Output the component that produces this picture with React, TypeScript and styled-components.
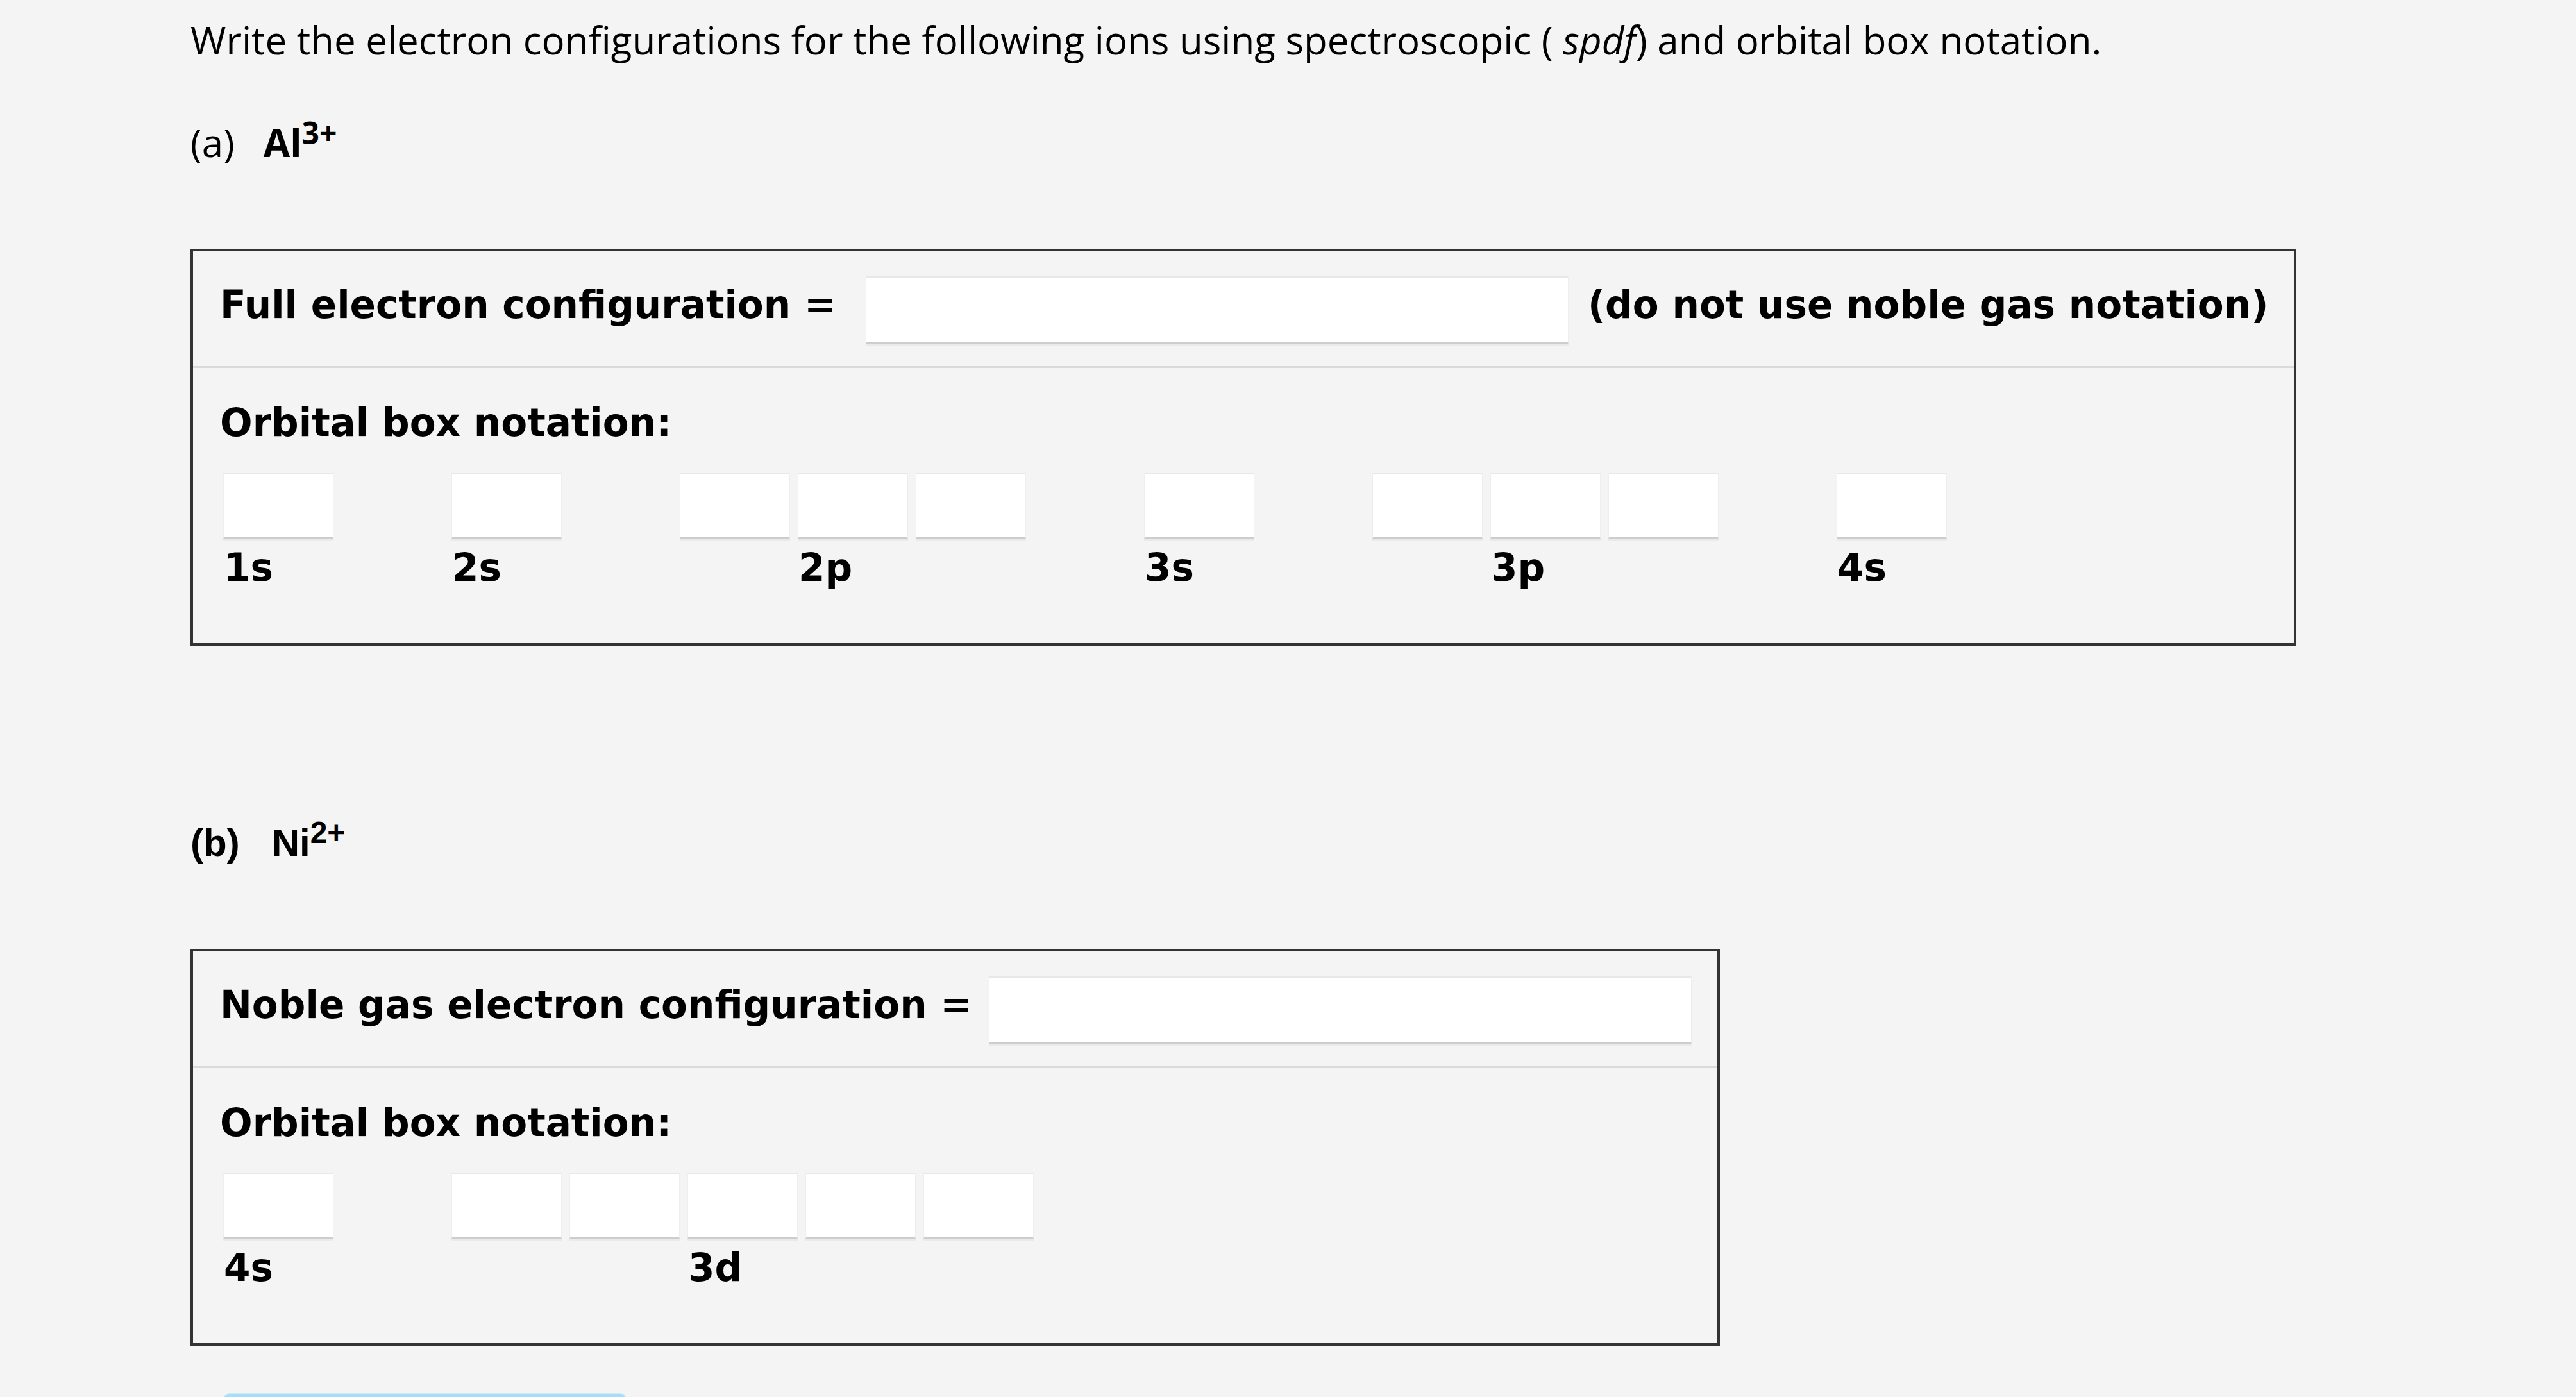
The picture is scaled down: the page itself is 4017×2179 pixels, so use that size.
import React from "react";
import styled, { createGlobalStyle } from "styled-components";

const GlobalStyle = createGlobalStyle`
  html, body {
    margin: 0;
    padding: 0;
    background: #f4f4f4;
  }
`;

const Page = styled.div`
  display: flex;
  flex-direction: column;
  align-items: flex-start;
  padding: 22px 0 0 297px;
  color: #000;
`;

const Intro = styled.div`
  font-family: "Open Sans", "Noto Sans", sans-serif;
  font-size: 60px;
  line-height: 80px;
  white-space: nowrap;
`;

const Part = styled.div<{ $top: number }>`
  margin-top: ${(p) => p.$top}px;
  font-family: "Open Sans", "Noto Sans", sans-serif;
  font-size: 60px;
  line-height: 80px;
  display: flex;
  align-items: baseline;
  gap: 45px;
`;

const PartB = styled.div<{ $top: number }>`
  margin-top: ${(p) => p.$top}px;
  font-family: "Liberation Sans", Arial, sans-serif;
  font-weight: 700;
  font-size: 60px;
  line-height: 72px;
  display: flex;
  align-items: baseline;
  gap: 50px;
`;

const Ion = styled.span`
  font-weight: 700;
`;

const Sup = styled.sup`
  font-size: 0.8em;
  line-height: 0;
  vertical-align: 0.42em;
`;

const Card = styled.div<{ $top: number }>`
  margin-top: ${(p) => p.$top}px;
  border: 4px solid #333;
  display: flex;
  flex-direction: column;
  font-family: Verdana, "DejaVu Sans", sans-serif;
  font-weight: 700;
  font-size: 59.6px;
  line-height: 72px;
`;

const ConfigRow = styled.div`
  display: flex;
  align-items: flex-start;
  padding: 39px 40px 34px 42px;
  border-bottom: 3px solid #dadada;
  white-space: nowrap;
`;

const RowText = styled.span<{ $before?: number; $after?: number }>`
  margin: 9px ${(p) => p.$after ?? 0}px 0 ${(p) => p.$before ?? 0}px;
`;

const Field = styled.div`
  box-sizing: border-box;
  width: 1096px;
  height: 106px;
  background: #fff;
  border-top: 2px solid #e8e8e8;
  border-left: 1px solid #eeeeee;
  border-right: 1px solid #eeeeee;
  border-bottom: 3px solid #cdcdcd;
  box-shadow: 0 3px 0 #eaeaea;
`;

const OrbitalSection = styled.div`
  padding: 50px 42px 81px 42px;
`;

const OrbitalTitle = styled.div`
  margin-bottom: 41px;
`;

const Groups = styled.div`
  display: flex;
  gap: 184px;
  padding-left: 5px;
`;

const Group = styled.div<{ $count: number }>`
  display: grid;
  grid-template-columns: repeat(${(p) => p.$count}, 172px);
  column-gap: 12px;
  row-gap: 9px;
`;

const Slot = styled.div`
  box-sizing: border-box;
  height: 104px;
  background: #fff;
  border-top: 2px solid #e8e8e8;
  border-left: 1px solid #eeeeee;
  border-right: 1px solid #eeeeee;
  border-bottom: 3px solid #cdcdcd;
  box-shadow: 0 3px 0 #eaeaea;
`;

const SubLabel = styled.div<{ $col: number }>`
  grid-row: 2;
  grid-column: ${(p) => p.$col};
  padding-left: 1px;
`;

const Button = styled.div`
  margin: 74px 0 0 51px;
  width: 629px;
  height: 90px;
  border-radius: 10px;
  background: #a9dcf5;
  border-top: 2px solid #c9ebfb;
`;

type Orbital = { name: string; count: number };

const OrbitalBoxes = ({ orbitals }: { orbitals: Orbital[] }) => (
  <OrbitalSection>
    <OrbitalTitle>Orbital box notation:</OrbitalTitle>
    <Groups>
      {orbitals.map((o) => (
        <Group key={o.name} $count={o.count}>
          {Array.from({ length: o.count }).map((_, i) => (
            <Slot key={i} />
          ))}
          <SubLabel $col={Math.floor(o.count / 2) + 1}>{o.name}</SubLabel>
        </Group>
      ))}
    </Groups>
  </OrbitalSection>
);

const App = () => {
  const alOrbitals: Orbital[] = [
    { name: "1s", count: 1 },
    { name: "2s", count: 1 },
    { name: "2p", count: 3 },
    { name: "3s", count: 1 },
    { name: "3p", count: 3 },
    { name: "4s", count: 1 },
  ];
  const niOrbitals: Orbital[] = [
    { name: "4s", count: 1 },
    { name: "3d", count: 5 },
  ];

  return (
    <>
      <GlobalStyle />
      <Page>
        <Intro>
          Write the electron configurations for the following ions using spectroscopic ( <i>spdf</i>) and
          orbital box notation.
        </Intro>
        <Part $top={80}>
          <span>(a)</span>
          <Ion>
            Al<Sup>3+</Sup>
          </Ion>
        </Part>
        <Card $top={126}>
          <ConfigRow>
            <RowText $after={46}>Full electron configuration =</RowText>
            <Field />
            <RowText $before={30}>(do not use noble gas notation)</RowText>
          </ConfigRow>
          <OrbitalBoxes orbitals={alOrbitals} />
        </Card>
        <PartB $top={272}>
          <span>(b)</span>
          <span>
            Ni<Sup>2+</Sup>
          </span>
        </PartB>
        <Card $top={129}>
          <ConfigRow>
            <RowText $after={26}>Noble gas electron configuration =</RowText>
            <Field />
          </ConfigRow>
          <OrbitalBoxes orbitals={niOrbitals} />
        </Card>
        <Button />
      </Page>
    </>
  );
};

export default App;
